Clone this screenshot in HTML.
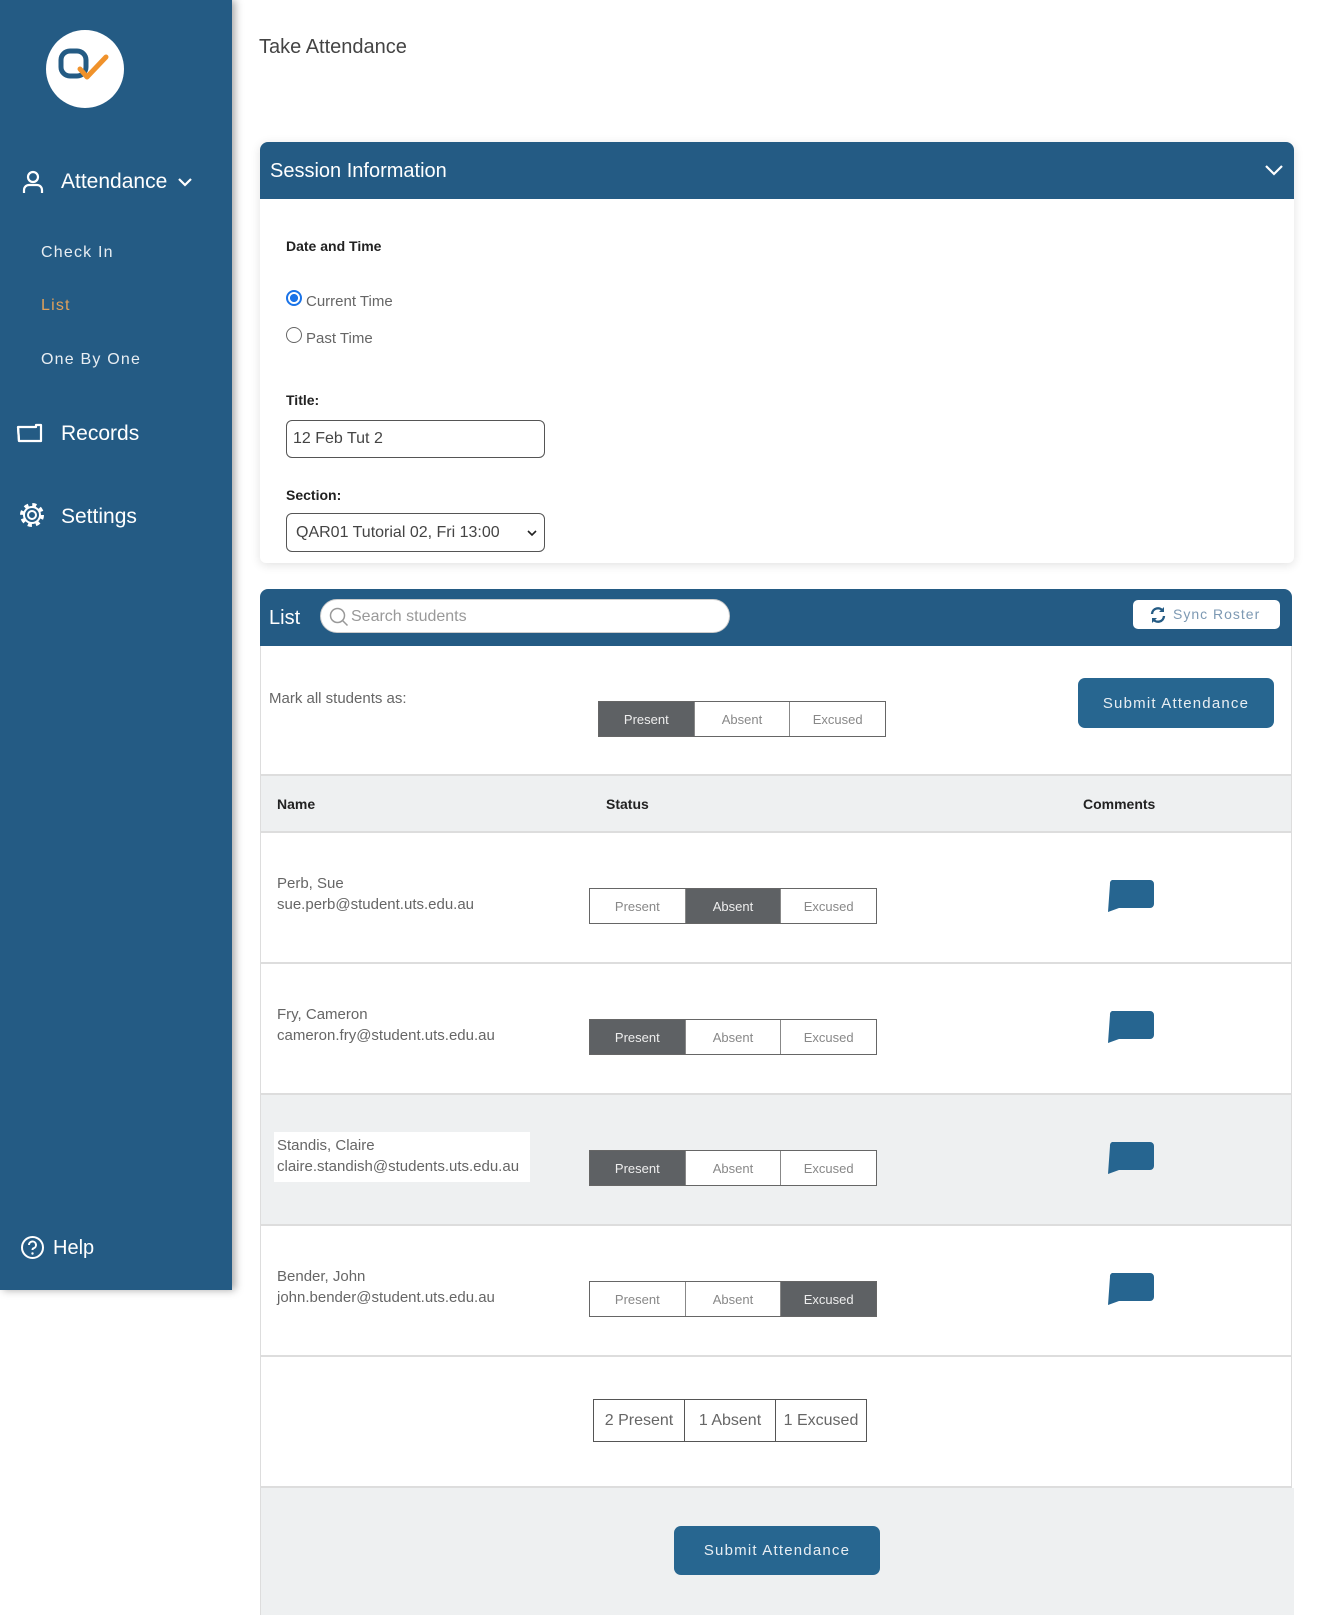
<!DOCTYPE html>
<html><head><meta charset="utf-8"><style>
*{box-sizing:border-box;margin:0;padding:0}
body{width:1320px;height:1615px;background:#fff;font-family:"Liberation Sans",sans-serif;position:relative;overflow:hidden;color:#333}
.abs{position:absolute}
#side{left:0;top:0;width:232px;height:1290px;background:#245b84;box-shadow:3px 0 8px rgba(0,0,0,.35)}
.nav{color:#fff;font-size:21px;font-weight:300}
.sub{color:#e8eef3;font-size:16px;letter-spacing:1.2px}
.panel{background:#fff;box-shadow:0 2px 10px rgba(0,0,0,.12)}
.hdr{background:#245b84;color:#fff}
.lbl{font-size:14px;font-weight:bold;color:#222}
.seg{display:flex;border:1px solid #666;height:36px;width:288px}
.seg div{flex:1;display:flex;align-items:center;justify-content:center;font-size:13px;color:#888;border-right:1px solid #888}
.seg div:last-child{border-right:none}
.seg .on{background:#5e6164;color:#eee}
.row{left:260px;width:1032px;height:131px;border-bottom:2px solid #ddd;border-left:1px solid #ddd;border-right:1px solid #ddd}
.nm{left:16px;top:40px;font-size:15px;color:#666;line-height:21px}
.row .seg{left:328px;top:55px;position:absolute}
.cm{left:846px;top:47px;position:absolute}
.btn{background:#276690;color:#e8eef3;border-radius:7px;display:flex;align-items:center;justify-content:center;font-size:15px;letter-spacing:1.2px}
</style></head><body>
<div id="side" class="abs">
  <div class="abs" style="left:46px;top:30px;width:78px;height:78px;border-radius:50%;background:#fff"></div>
  <svg class="abs" style="left:58px;top:47px" width="54" height="40" viewBox="0 0 54 40"><rect x="3" y="4" width="25" height="25" rx="9" fill="none" stroke="#245b84" stroke-width="5"/><path d="M22 22 L29 30 L48 10" fill="none" stroke="#f0922b" stroke-width="5" stroke-linecap="round" stroke-linejoin="round"/></svg>
  <svg class="abs" style="left:22px;top:170px" width="22" height="24" viewBox="0 0 22 24"><circle cx="11" cy="7" r="5" fill="none" stroke="#fff" stroke-width="2.2"/><path d="M2 23v-3a5 5 0 0 1 5-5h8a5 5 0 0 1 5 5v3" fill="none" stroke="#fff" stroke-width="2.2"/></svg>
  <div class="abs nav" style="left:61px;top:170px">Attendance</div>
  <svg class="abs" style="left:177px;top:177px" width="16" height="10" viewBox="0 0 16 10"><path d="M2 2l6 6 6-6" fill="none" stroke="#fff" stroke-width="2.2"/></svg>
  <div class="abs sub" style="left:41px;top:244px">Check In</div>
  <div class="abs sub" style="left:41px;top:297px;color:#e0a05a">List</div>
  <div class="abs sub" style="left:41px;top:351px">One By One</div>
  <svg class="abs" style="left:16px;top:422px" width="28" height="22" viewBox="0 0 28 22"><path d="M2 5h18v-2h5v16H3z" fill="none" stroke="#fff" stroke-width="2.2" stroke-linejoin="round"/><path d="M2 5l1 14" stroke="#fff" stroke-width="2.2"/></svg>
  <div class="abs nav" style="left:61px;top:422px">Records</div>
  <svg class="abs" style="left:19px;top:502px" width="26" height="26" viewBox="0 0 26 26"><circle cx="13" cy="13" r="4" fill="none" stroke="#fff" stroke-width="2"/><circle cx="13" cy="13" r="8" fill="none" stroke="#fff" stroke-width="2"/><circle cx="13" cy="13" r="10" fill="none" stroke="#fff" stroke-width="4" stroke-dasharray="4 3.85"/></svg>
  <div class="abs nav" style="left:61px;top:505px">Settings</div>
  <svg class="abs" style="left:20px;top:1235px" width="25" height="25" viewBox="0 0 25 25"><circle cx="12.5" cy="12.5" r="10.5" fill="none" stroke="#fff" stroke-width="2"/><path d="M9 10a3.5 3.5 0 1 1 4.5 3.3c-.8.3-1 .8-1 1.7" fill="none" stroke="#fff" stroke-width="2"/><circle cx="12.5" cy="18.5" r="1.2" fill="#fff"/></svg>
  <div class="abs nav" style="left:53px;top:1237px;font-size:20px">Help</div>
</div>

<div class="abs" style="left:259px;top:36px;font-size:20px;font-weight:300;color:#444">Take Attendance</div>

<div class="abs panel" style="left:260px;top:142px;width:1034px;height:421px;border-radius:8px 8px 6px 6px">
  <div class="abs hdr" style="left:0;top:0;width:1034px;height:57px;border-radius:8px 8px 0 0"><div class="abs" style="left:10px;top:18px;font-size:20px;font-weight:300">Session Information</div>
  <svg class="abs" style="left:1004px;top:22px" width="20" height="12" viewBox="0 0 20 12"><path d="M2 2l8 8 8-8" fill="none" stroke="#fff" stroke-width="2.2"/></svg></div>
  <div class="abs lbl" style="left:26px;top:96px">Date and Time</div>
  <div class="abs" style="left:26px;top:148px;width:16px;height:16px;border-radius:50%;border:2px solid #1a73e8;background:radial-gradient(#1a73e8 45%,#fff 50%)"></div>
  <div class="abs" style="left:46px;top:151px;font-size:15px;color:#666">Current Time</div>
  <div class="abs" style="left:26px;top:185px;width:16px;height:16px;border-radius:50%;border:1px solid #666"></div>
  <div class="abs" style="left:46px;top:188px;font-size:15px;color:#666">Past Time</div>
  <div class="abs lbl" style="left:26px;top:250px">Title:</div>
  <div class="abs" style="left:26px;top:278px;width:259px;height:38px;border:1px solid #555;border-radius:6px;font-size:16px;padding:9px 6px;color:#444">12 Feb Tut 2</div>
  <div class="abs lbl" style="left:26px;top:345px">Section:</div>
  <div class="abs" style="left:26px;top:371px;width:259px;height:39px;border:1px solid #555;border-radius:6px;font-size:16px;padding:10px 9px;color:#444">QAR01 Tutorial 02, Fri 13:00<svg class="abs" style="left:240px;top:16px" width="10" height="7" viewBox="0 0 10 7"><path d="M1 1l4 4 4-4" fill="none" stroke="#222" stroke-width="1.6"/></svg></div>
</div>

<div class="abs hdr" style="left:260px;top:589px;width:1032px;height:57px;border-radius:8px 8px 0 0">
  <div class="abs" style="left:9px;top:18px;font-size:20px;font-weight:300">List</div>
  <div class="abs" style="left:60px;top:10px;width:410px;height:34px;background:#fff;border-radius:17px;border:1px solid #ccc"><svg class="abs" style="left:8px;top:7px" width="20" height="20" viewBox="0 0 20 20"><circle cx="8.5" cy="8.5" r="7" fill="none" stroke="#999" stroke-width="1.5"/><path d="M13.5 13.5l5 5" stroke="#999" stroke-width="1.5"/></svg><div class="abs" style="left:30px;top:8px;font-size:16px;color:#999">Search students</div></div>
  <div class="abs" style="left:873px;top:11px;width:147px;height:29px;background:#fff;border-radius:5px"><svg class="abs" style="left:16px;top:6px" width="18" height="18" viewBox="0 0 18 18"><path d="M3 8a6 6 0 0 1 11-3M15 10a6 6 0 0 1-11 3" fill="none" stroke="#245b84" stroke-width="2.4"/><path d="M15 1v5h-5zM3 17v-5h5z" fill="#245b84"/></svg><div class="abs" style="left:40px;top:6px;font-size:14px;color:#7d99b3;letter-spacing:1px">Sync Roster</div></div>
</div>

<div class="abs" style="left:260px;top:646px;width:1032px;height:130px;border:1px solid #ddd;border-top:none;border-bottom:2px solid #ddd">
  <div class="abs" style="left:8px;top:44px;font-size:15px;color:#666">Mark all students as:</div>
  <div class="abs seg" style="left:337px;top:55px"><div class="on">Present</div><div>Absent</div><div>Excused</div></div>
  <div class="abs btn" style="left:817px;top:32px;width:196px;height:50px">Submit Attendance</div>
</div>
<div class="abs" style="left:260px;top:776px;width:1032px;height:57px;background:#eef0f1;border-bottom:2px solid #ddd;border-left:1px solid #ddd;border-right:1px solid #ddd;font-size:14px;font-weight:bold;color:#222">
  <div class="abs" style="left:16px;top:20px">Name</div>
  <div class="abs" style="left:345px;top:20px">Status</div>
  <div class="abs" style="left:822px;top:20px">Comments</div>
</div>

<div class="abs row" style="top:833px"><div class="abs nm">Perb, Sue<br>sue.perb@student.uts.edu.au</div><div class="seg"><div>Present</div><div class="on">Absent</div><div>Excused</div></div><svg class="cm" width="48" height="34" viewBox="0 0 48 34"><path d="M5 0h38a4 4 0 0 1 4 4v20a4 4 0 0 1-4 4H12L1 32 3 4a4 4 0 0 1 2-4z" fill="#266590"/></svg></div>
<div class="abs row" style="top:964px"><div class="abs nm">Fry, Cameron<br>cameron.fry@student.uts.edu.au</div><div class="seg"><div class="on">Present</div><div>Absent</div><div>Excused</div></div><svg class="cm" width="48" height="34" viewBox="0 0 48 34"><path d="M5 0h38a4 4 0 0 1 4 4v20a4 4 0 0 1-4 4H12L1 32 3 4a4 4 0 0 1 2-4z" fill="#266590"/></svg></div>
<div class="abs row" style="top:1095px;background:#eef0f1"><div class="abs" style="left:13px;top:37px;width:256px;height:50px;background:#fff"></div><div class="abs nm">Standis, Claire<br>claire.standish@students.uts.edu.au</div><div class="seg" style="background:#fff"><div class="on">Present</div><div>Absent</div><div>Excused</div></div><svg class="cm" width="48" height="34" viewBox="0 0 48 34"><path d="M5 0h38a4 4 0 0 1 4 4v20a4 4 0 0 1-4 4H12L1 32 3 4a4 4 0 0 1 2-4z" fill="#266590"/></svg></div>
<div class="abs row" style="top:1226px"><div class="abs nm">Bender, John<br>john.bender@student.uts.edu.au</div><div class="seg"><div>Present</div><div>Absent</div><div class="on">Excused</div></div><svg class="cm" width="48" height="34" viewBox="0 0 48 34"><path d="M5 0h38a4 4 0 0 1 4 4v20a4 4 0 0 1-4 4H12L1 32 3 4a4 4 0 0 1 2-4z" fill="#266590"/></svg></div>
<div class="abs row" style="top:1357px"><div class="abs" style="left:332px;top:42px;width:274px;height:43px;border:1px solid #555;display:flex;font-size:16px;color:#666"><div style="flex:1;display:flex;align-items:center;justify-content:center;border-right:1px solid #555">2 Present</div><div style="flex:1;display:flex;align-items:center;justify-content:center;border-right:1px solid #555">1 Absent</div><div style="flex:1;display:flex;align-items:center;justify-content:center">1 Excused</div></div></div>
<div class="abs" style="left:260px;top:1488px;width:1034px;height:127px;background:#eef0f1;border-left:1px solid #ddd">
  <div class="abs btn" style="left:413px;top:38px;width:206px;height:49px">Submit Attendance</div>
</div>
</body></html>
